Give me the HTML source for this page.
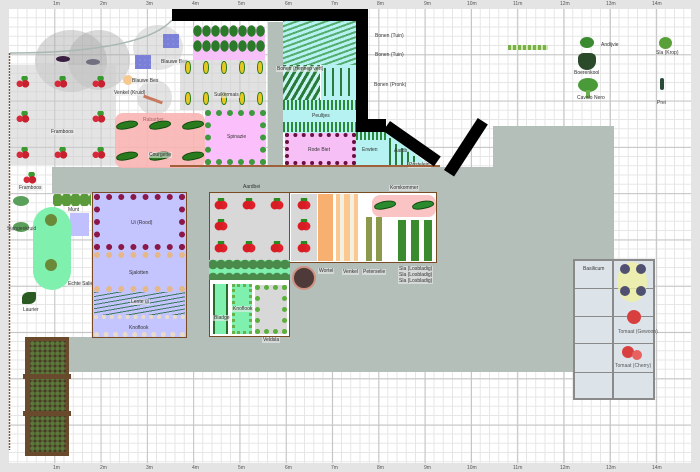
<!DOCTYPE html>
<html><head><meta charset="utf-8"><style>
*{margin:0;padding:0;box-sizing:border-box}
body{width:700px;height:472px;overflow:hidden;position:relative;background:#fff;font-family:"Liberation Sans",sans-serif}
.grid{position:absolute;left:9px;top:9px;width:682px;height:454px;
background-image:linear-gradient(#c4c4c4 1px,transparent 1px),linear-gradient(90deg,#c4c4c4 1px,transparent 1px),linear-gradient(#e6e6e6 1px,transparent 1px),linear-gradient(90deg,#e6e6e6 1px,transparent 1px);
background-size:46.3px 46.3px,46.3px 46.3px,9.26px 9.26px,9.26px 9.26px;background-position:-1px -1px}
.a{position:absolute}
.g{position:absolute;background:#b4bfba}
.t{position:absolute;font-size:5px;color:#333;white-space:nowrap;background:rgba(235,235,235,.6);line-height:6px;padding:0 1px}
.bk{position:absolute;background:#000}
.bed{position:absolute;border:1.5px solid #7a4a22}
.circ{position:absolute;border-radius:50%}
.rb{position:absolute;width:16px;height:12px;background:radial-gradient(circle at 30% 65%,#d42a3a 0 3px,transparent 3.5px),radial-gradient(circle at 65% 65%,#c8202e 0 3.5px,transparent 4px),radial-gradient(ellipse at 60% 20%,#3a9a30 0 3px,transparent 3.5px)}
.st{position:absolute;width:14px;height:13px;background:radial-gradient(circle at 35% 55%,#d81c24 0 4px,transparent 4.5px),radial-gradient(circle at 65% 55%,#e0202a 0 4px,transparent 4.5px),radial-gradient(ellipse at 50% 15%,#2a8a20 0 3px,transparent 3.5px)}
.cz{position:absolute;width:22px;height:8px;background:#2a7a1e;border-radius:50% 60% 40% 50%;transform:rotate(-12deg);border:1px solid #124a0e}
.mz{position:absolute;width:6px;height:13px;background:#e8c820;border-radius:45%;border:1px solid #2a7a1e}
.ruler{position:absolute;background:#e4e4e4}
.rl{position:absolute;font-size:5px;color:#555}
</style></head><body>
<div class="grid"></div>
<!-- rulers -->
<div class="ruler" style="left:0;top:0;width:700px;height:9px"></div>
<div class="ruler" style="left:0;top:0;width:9px;height:472px"></div>
<div class="ruler" style="left:691px;top:0;width:9px;height:472px"></div>
<div class="ruler" style="left:0;top:463px;width:700px;height:9px"></div>
<div class="rl" style="left:53px;top:1px">1m</div><div class="rl" style="left:100px;top:1px">2m</div><div class="rl" style="left:146px;top:1px">3m</div><div class="rl" style="left:192px;top:1px">4m</div><div class="rl" style="left:238px;top:1px">5m</div><div class="rl" style="left:285px;top:1px">6m</div><div class="rl" style="left:331px;top:1px">7m</div><div class="rl" style="left:377px;top:1px">8m</div><div class="rl" style="left:424px;top:1px">9m</div><div class="rl" style="left:467px;top:1px">10m</div><div class="rl" style="left:513px;top:1px">11m</div><div class="rl" style="left:560px;top:1px">12m</div><div class="rl" style="left:606px;top:1px">13m</div><div class="rl" style="left:652px;top:1px">14m</div>
<div class="rl" style="left:53px;top:465px">1m</div><div class="rl" style="left:100px;top:465px">2m</div><div class="rl" style="left:146px;top:465px">3m</div><div class="rl" style="left:192px;top:465px">4m</div><div class="rl" style="left:238px;top:465px">5m</div><div class="rl" style="left:285px;top:465px">6m</div><div class="rl" style="left:331px;top:465px">7m</div><div class="rl" style="left:377px;top:465px">8m</div><div class="rl" style="left:424px;top:465px">9m</div><div class="rl" style="left:467px;top:465px">10m</div><div class="rl" style="left:513px;top:465px">11m</div><div class="rl" style="left:560px;top:465px">12m</div><div class="rl" style="left:606px;top:465px">13m</div><div class="rl" style="left:652px;top:465px">14m</div>

<!-- gray paths -->
<div class="g" style="left:52px;top:167px;width:441px;height:26px"></div>
<div class="g" style="left:493px;top:126px;width:121px;height:67px"></div>
<div class="g" style="left:92px;top:193px;width:522px;height:144px"></div>
<div class="g" style="left:69px;top:337px;width:545px;height:35px"></div>
<div class="g" style="left:268px;top:22px;width:15px;height:145px"></div>

<!-- shaded bushes -->
<div class="circ" style="left:35px;top:30px;width:72px;height:62px;background:rgba(170,170,170,.45)"></div>
<div class="circ" style="left:68px;top:30px;width:62px;height:60px;background:rgba(170,170,170,.45)"></div>
<div class="circ" style="left:133px;top:25px;width:50px;height:45px;background:rgba(200,200,200,.5)"></div>
<div class="circ" style="left:137px;top:80px;width:35px;height:35px;background:rgba(200,200,200,.5)"></div>
<svg class="a" style="left:0;top:0" width="700" height="472"><path d="M10 53 C 80 53,150 45,172 20" stroke="#a9b8b2" stroke-width="1.5" fill="none"/><line x1="9.5" y1="53" x2="9.5" y2="450" stroke="#7a5a3a" stroke-width="1.5" stroke-dasharray="2 1"/></svg>
<!-- Framboos -->
<div class="a" style="left:10px;top:65px;width:106px;height:100px;background:rgba(205,205,205,.55)"></div>
<div class="rb" style="left:15px;top:76px"></div><div class="rb" style="left:53px;top:76px"></div><div class="rb" style="left:91px;top:76px"></div>
<div class="rb" style="left:15px;top:111px"></div><div class="rb" style="left:91px;top:111px"></div>
<div class="rb" style="left:15px;top:147px"></div><div class="rb" style="left:53px;top:147px"></div><div class="rb" style="left:91px;top:147px"></div>
<div class="rb" style="left:22px;top:172px"></div>
<div class="t" style="left:50px;top:129px">Framboos</div>
<div class="a" style="left:56px;top:56px;width:14px;height:6px;background:#3a2040;border-radius:50%"></div>
<div class="a" style="left:86px;top:59px;width:14px;height:6px;background:#707080;border-radius:50%"></div>
<div class="a" style="left:135px;top:55px;width:16px;height:14px;background:radial-gradient(circle,#7a80d8 0 3px,transparent 3.5px) 0 0/5px 5px"></div>
<div class="a" style="left:163px;top:34px;width:16px;height:14px;background:radial-gradient(circle,#7a80d8 0 3px,transparent 3.5px) 0 0/5px 5px"></div>
<div class="t" style="left:160px;top:59px">Blauwe Bes</div>
<div class="circ" style="left:123px;top:75px;width:10px;height:10px;background:#f5c890"></div>
<div class="t" style="left:131px;top:78px">Blauwe Bes</div>
<div class="t" style="left:113px;top:90px">Venkel (Kruid)</div>
<div class="a" style="left:143px;top:98px;width:20px;height:3px;background:#c87a60;transform:rotate(20deg)"></div>

<!-- Rabarber / Courgette -->
<div class="a" style="left:115px;top:113px;width:90px;height:55px;background:#fab4b4;border-radius:8px;opacity:.9"></div>
<div class="cz" style="left:116px;top:121px"></div><div class="cz" style="left:149px;top:121px"></div><div class="cz" style="left:182px;top:121px"></div>
<div class="cz" style="left:116px;top:152px"></div><div class="cz" style="left:149px;top:152px"></div><div class="cz" style="left:182px;top:152px"></div>
<div class="t" style="left:142px;top:117px;background:none;color:#a66">Rabarber</div>
<div class="t" style="left:148px;top:152px">Courgette</div>

<!-- Snijbiet -->
<div class="a" style="left:193px;top:27px;width:72px;height:33px;background:#f8c0f8"></div>
<div class="a" style="left:193px;top:25px;width:72px;height:12px;background:radial-gradient(ellipse,#2a7a2a 0 4px,transparent 4.5px) 0 0/9px 12px"></div>
<div class="a" style="left:193px;top:40px;width:72px;height:12px;background:radial-gradient(ellipse,#2a7a2a 0 4px,transparent 4.5px) 0 0/9px 12px"></div>
<!-- Mais -->
<div class="a" style="left:180px;top:60px;width:86px;height:50px;background:rgba(205,205,205,.6)"></div>
<div class="mz" style="left:185px;top:61px"></div><div class="mz" style="left:203px;top:61px"></div><div class="mz" style="left:221px;top:61px"></div><div class="mz" style="left:239px;top:61px"></div><div class="mz" style="left:257px;top:61px"></div>
<div class="mz" style="left:185px;top:92px"></div><div class="mz" style="left:203px;top:92px"></div><div class="mz" style="left:221px;top:92px"></div><div class="mz" style="left:239px;top:92px"></div><div class="mz" style="left:257px;top:92px"></div>
<div class="t" style="left:213px;top:92px">Suikermais</div>
<!-- Spinazie -->
<div class="a" style="left:205px;top:110px;width:61px;height:55px;background:#fbc0fb;border:6px solid #3e9a3e;border-style:dotted"></div>
<div class="t" style="left:226px;top:134px;background:none">Spinazie</div>

<!-- Bonen -->
<div class="a" style="left:283px;top:20px;width:73px;height:45px;background:#b6f2f2"></div>
<div class="a" style="left:283px;top:20px;width:73px;height:45px;background:repeating-linear-gradient(160deg,#3c9a4c 0 2px,transparent 2px 5px);opacity:.8"></div>
<div class="a" style="left:283px;top:65px;width:60px;height:35px;background:repeating-linear-gradient(120deg,#2a7a3a 0 3px,#c8f4f4 3px 6px)"></div>
<div class="a" style="left:320px;top:65px;width:36px;height:35px;background:#b6f2f2;border-left:1px solid #fff"></div>
<div class="a" style="left:324px;top:68px;width:28px;height:28px;background:repeating-linear-gradient(90deg,#2a7a3a 0 2px,transparent 2px 8px)"></div>
<div class="t" style="left:276px;top:66px">Bonen (Hennep vert)</div>
<div class="a" style="left:283px;top:100px;width:73px;height:33px;background:#b6f2f2"></div>
<div class="a" style="left:283px;top:100px;width:73px;height:10px;background:repeating-linear-gradient(90deg,#2a8a3a 0 2px,transparent 2px 4px)"></div>
<div class="a" style="left:283px;top:122px;width:73px;height:10px;background:repeating-linear-gradient(90deg,#2a8a3a 0 2px,transparent 2px 4px)"></div>
<div class="t" style="left:311px;top:113px;background:none">Peultjes</div>
<div class="a" style="left:285px;top:133px;width:71px;height:32px;background:#f6c0f6;border:4px dotted #6a1040"></div>
<div class="t" style="left:307px;top:147px;background:none">Rode Biet</div>
<div class="a" style="left:356px;top:132px;width:30px;height:34px;background:#b6f2f2"></div>
<div class="a" style="left:356px;top:132px;width:30px;height:8px;background:repeating-linear-gradient(90deg,#2a8a3a 0 2px,transparent 2px 4px)"></div>
<div class="t" style="left:361px;top:147px;background:none">Erwten</div>
<svg class="a" style="left:386px;top:130px" width="50" height="40"><polygon points="0,0 0,36 44,36" fill="#b6f2f2"/><path d="M4 8v28M10 14v22M16 18v18M22 22v14M28 26v10" stroke="#2a7a3a" stroke-width="2"/></svg>
<div class="t" style="left:393px;top:148px;background:none">Aardb.</div>
<div class="t" style="left:408px;top:162px">Postelein</div>
<div class="a" style="left:170px;top:165px;width:270px;height:2px;background:#a0603a"></div>

<!-- black walls -->
<div class="bk" style="left:172px;top:9px;width:196px;height:12px"></div>
<div class="bk" style="left:356px;top:9px;width:12px;height:111px"></div>
<div class="bk" style="left:356px;top:119px;width:30px;height:13px"></div>
<div class="bk" style="left:384px;top:140px;width:62px;height:12px;transform:rotate(35deg);transform-origin:0 0;left:390px;top:121px"></div>
<div class="bk" style="left:444px;top:139px;width:62px;height:12px;transform:rotate(-57deg);transform-origin:0 0;left:444px;top:170px"></div>
<div class="t" style="left:374px;top:33px;background:none">Bonen (Tuin)</div>
<div class="t" style="left:374px;top:52px;background:none">Bonen (Tuin)</div>
<div class="t" style="left:373px;top:82px;background:none">Bonen (Pronk)</div>

<!-- left plants -->
<div class="a" style="left:52px;top:193px;width:40px;height:144px;background:#fff;opacity:0"></div>
<div class="a" style="left:53px;top:194px;width:38px;height:12px;background:radial-gradient(ellipse,#5a9a3a 0 5px,transparent 5.5px) 0 0/9px 12px"></div>
<div class="t" style="left:67px;top:207px;background:none">Munt</div>
<div class="a" style="left:70px;top:213px;width:19px;height:23px;background:#c0c0ff"></div>
<div class="a" style="left:33px;top:207px;width:38px;height:83px;background:#7ff0ae;border-radius:19px"></div>
<div class="circ" style="left:45px;top:214px;width:12px;height:12px;background:#6a8a3a"></div>
<div class="circ" style="left:45px;top:259px;width:12px;height:12px;background:#6a8a3a"></div>
<div class="t" style="left:18px;top:185px">Framboos</div>
<div class="a" style="left:13px;top:196px;width:16px;height:10px;background:#5aa05a;border-radius:50%"></div>
<div class="a" style="left:13px;top:222px;width:16px;height:10px;background:#5aa05a;border-radius:50%"></div>
<div class="t" style="left:6px;top:226px;background:none">Slangenkruid</div>
<div class="t" style="left:67px;top:281px">Echte Salie</div>
<div class="a" style="left:22px;top:292px;width:14px;height:12px;background:#2a5a22;border-radius:50% 10%"></div>
<div class="t" style="left:22px;top:307px;background:none">Laurier</div>

<!-- Ui bed -->
<div class="bed" style="left:92px;top:192px;width:95px;height:146px;background:#c4c4ff"></div>
<div class="a" style="left:94px;top:194px;width:91px;height:56px;border:6px dotted #8a1848"></div>
<div class="t" style="left:130px;top:220px;background:none">Ui (Rood)</div>
<div class="a" style="left:94px;top:252px;width:91px;height:40px;border-top:6px dotted #e6b888;border-bottom:6px dotted #e6b888"></div>
<div class="t" style="left:128px;top:270px;background:none">Sjalotten</div>
<div class="a" style="left:94px;top:292px;width:91px;height:23px;background:repeating-linear-gradient(170deg,#3a7a5a 0 1px,transparent 1px 4px)"></div>
<div class="t" style="left:130px;top:299px">Lente ui</div>
<div class="a" style="left:94px;top:315px;width:91px;height:22px;border-top:4px dotted #e8dcc8;border-bottom:5px dotted #e8dcc8"></div>
<div class="t" style="left:128px;top:325px;background:none">Knoflook</div>

<!-- Aardbei -->
<div class="bed" style="left:209px;top:192px;width:81px;height:70px;background:#d8d8d8"></div>
<div class="st" style="left:214px;top:198px"></div><div class="st" style="left:242px;top:198px"></div><div class="st" style="left:270px;top:198px"></div>
<div class="st" style="left:214px;top:219px"></div>
<div class="st" style="left:214px;top:241px"></div><div class="st" style="left:242px;top:241px"></div><div class="st" style="left:270px;top:241px"></div>
<div class="t" style="left:242px;top:184px;background:none">Aardbei</div>
<div class="bed" style="left:289px;top:192px;width:148px;height:71px;background:#fff"></div>
<div class="a" style="left:291px;top:194px;width:26px;height:67px;background:#d8d8d8"></div>
<div class="st" style="left:297px;top:198px"></div><div class="st" style="left:297px;top:219px"></div><div class="st" style="left:297px;top:241px"></div>
<div class="a" style="left:318px;top:194px;width:15px;height:67px;background:#f8b070"></div>
<div class="a" style="left:336px;top:194px;width:22px;height:67px;background:#fac890"></div>
<div class="a" style="left:340px;top:194px;width:4px;height:67px;background:#f4f0e0"></div><div class="a" style="left:350px;top:194px;width:4px;height:67px;background:#f4f0e0"></div>
<div class="a" style="left:366px;top:217px;width:6px;height:44px;background:#8a9a4a"></div><div class="a" style="left:376px;top:217px;width:6px;height:44px;background:#8a9a4a"></div>
<div class="a" style="left:372px;top:195px;width:64px;height:22px;background:#fbc4c4;border-radius:8px"></div>
<div class="cz" style="left:374px;top:201px;background:#2a8a2e"></div><div class="cz" style="left:412px;top:201px;background:#2a8a2e"></div>
<div class="a" style="left:398px;top:220px;width:8px;height:41px;background:#3a8a2e"></div><div class="a" style="left:411px;top:220px;width:8px;height:41px;background:#3a8a2e"></div><div class="a" style="left:424px;top:220px;width:8px;height:41px;background:#3a8a2e"></div>
<div class="t" style="left:389px;top:185px">Komkommer</div>
<div class="t" style="left:318px;top:268px">Wortel</div>
<div class="t" style="left:342px;top:269px">Venkel</div>
<div class="t" style="left:362px;top:269px">Peterselie</div>
<div class="t" style="left:398px;top:266px">Sla (Losbladig)</div>
<div class="t" style="left:398px;top:272px">Sla (Losbladig)</div>
<div class="t" style="left:398px;top:278px">Sla (Losbladig)</div>
<div class="circ" style="left:292px;top:266px;width:24px;height:24px;background:#4e3a38;border:2px solid #d09080"></div>
<!-- Radijs & lower bed -->
<div class="a" style="left:209px;top:260px;width:81px;height:22px;background:#7ff0ae"></div>
<div class="a" style="left:209px;top:259px;width:81px;height:11px;background:radial-gradient(circle,#4a8a4a 0 4.5px,transparent 5px) 0 0/8px 11px"></div>
<div class="a" style="left:209px;top:272px;width:81px;height:11px;background:radial-gradient(circle,#4a8a4a 0 4.5px,transparent 5px) 0 0/8px 11px"></div>
<div class="bed" style="left:209px;top:280px;width:81px;height:57px;background:#fff;border-top:none"></div>
<div class="a" style="left:213px;top:284px;width:15px;height:50px;background:#7ff0ae;border-left:2px solid #2a6a2a;border-right:2px solid #2a6a2a"></div>
<div class="a" style="left:232px;top:284px;width:20px;height:50px;background:#7ff0ae;border:3px dotted #6ab04a"></div>
<div class="a" style="left:255px;top:285px;width:32px;height:49px;background:#d8d8d8;border:5px dotted #5ab03a"></div>
<div class="t" style="left:213px;top:315px">Bladge</div>
<div class="t" style="left:232px;top:306px">Knoflook</div>
<div class="t" style="left:262px;top:337px">Veldsla</div>

<!-- raised bed -->
<div class="a" style="left:25px;top:337px;width:44px;height:119px;background:#6a4a2c"></div>
<div class="a" style="left:30px;top:341px;width:36px;height:111px;background:radial-gradient(circle,#5a7a3a 0 2px,transparent 2.5px) 0 0/5px 5px,#4a3a26"></div>
<div class="a" style="left:23px;top:374px;width:48px;height:5px;background:#6a4a2c"></div>
<div class="a" style="left:23px;top:411px;width:48px;height:5px;background:#6a4a2c"></div>

<!-- greenhouse -->
<div class="a" style="left:573px;top:259px;width:82px;height:141px;background:#dce4ea;border:2px solid #8a8a8a"></div>
<div class="a" style="left:612px;top:259px;width:2px;height:141px;background:#8a8a8a"></div>
<div class="a" style="left:573px;top:288px;width:82px;height:1px;background:#8a8a8a"></div>
<div class="a" style="left:573px;top:316px;width:82px;height:1px;background:#8a8a8a"></div>
<div class="a" style="left:573px;top:343px;width:82px;height:1px;background:#8a8a8a"></div>
<div class="a" style="left:573px;top:372px;width:82px;height:1px;background:#8a8a8a"></div>
<div class="circ" style="left:617px;top:262px;width:30px;height:40px;background:#f0f0a0;opacity:.8"></div>
<div class="circ" style="left:620px;top:264px;width:10px;height:10px;background:#505070"></div><div class="circ" style="left:636px;top:264px;width:10px;height:10px;background:#505070"></div>
<div class="circ" style="left:620px;top:286px;width:10px;height:10px;background:#505070"></div><div class="circ" style="left:636px;top:286px;width:10px;height:10px;background:#505070"></div>
<div class="circ" style="left:627px;top:310px;width:14px;height:14px;background:#d84040"></div>
<div class="circ" style="left:622px;top:346px;width:12px;height:12px;background:#d84040"></div><div class="circ" style="left:632px;top:350px;width:10px;height:10px;background:#e86060"></div>
<div class="t" style="left:582px;top:266px;background:none">Basilicum</div>
<div class="t" style="left:617px;top:329px;background:none;color:#555">Tomaat (Gewoon)</div>
<div class="t" style="left:614px;top:363px;background:none;color:#555">Tomaat (Cherry)</div>

<!-- top right plants -->
<div class="a" style="left:508px;top:45px;width:40px;height:5px;background:repeating-linear-gradient(90deg,#7ab04a 0 3px,#cfe8b0 3px 5px)"></div>
<div class="circ" style="left:580px;top:37px;width:14px;height:11px;background:#3a8a30"></div>
<div class="t" style="left:600px;top:42px;background:none">Andijvie</div>
<div class="a" style="left:578px;top:53px;width:18px;height:17px;background:#2a4a2a;border-radius:30% 30% 50% 50%"></div>
<div class="t" style="left:573px;top:70px;background:none">Boerenkool</div>
<div class="circ" style="left:578px;top:78px;width:20px;height:14px;background:#4a9a3a"></div>
<div class="a" style="left:586px;top:90px;width:4px;height:8px;background:#6ab04a"></div>
<div class="t" style="left:576px;top:95px;background:none">Cavalo Nero</div>
<div class="circ" style="left:659px;top:37px;width:13px;height:12px;background:#5aa03a"></div>
<div class="t" style="left:655px;top:50px;background:none">Sla (Krop)</div>
<div class="a" style="left:660px;top:78px;width:4px;height:12px;background:#2a4a3a;border-radius:2px"></div>
<div class="t" style="left:656px;top:100px;background:none">Prei</div>
</body></html>
